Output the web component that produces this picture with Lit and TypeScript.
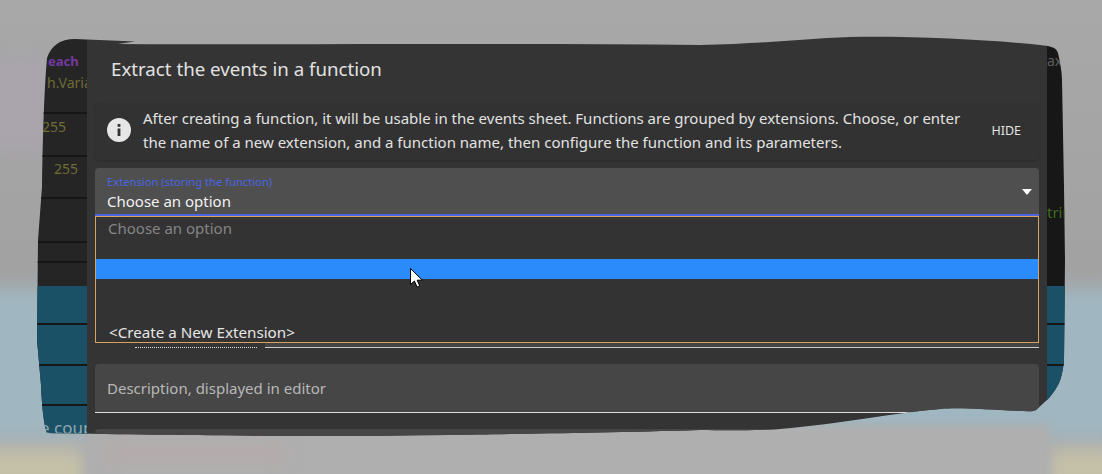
import { LitElement, html, css } from "lit";
import { customElement } from "lit/decorators.js";

@customElement("app-root")
export class AppRoot extends LitElement {
  static styles = css`
    :host { display: block; width: 1102px; height: 474px; font-family: "Noto Sans", sans-serif; }
    .stage { position: relative; width: 1102px; height: 474px; overflow: hidden; background: linear-gradient(#a8a8a8, #a2a2a2 55%, #aeaeae); }
    .blur { position: absolute; filter: blur(9px); }
    .blue { left: -20px; right: -20px; top: 288px; height: 152px; background: #a0b6c0; }
    .sand { left: -20px; width: 105px; top: 450px; height: 40px; background: #c5c1a8; }
    .sand2 { right: -20px; width: 75px; top: 450px; height: 40px; background: #c5c1a8; }
    .mid { left: 85px; right: 52px; top: 425px; height: 70px; background: #afafaf; filter: blur(4px); }
    .pink { left: 105px; width: 180px; top: 447px; height: 14px; background: #b8aaaa; }
    .tint { left: -10px; width: 60px; top: 60px; height: 90px; background: #aaa4ad; }
    .window {
      position: absolute; inset: 0; display: flex;
      clip-path: path("M47 58 C51 46 60 39 75 39 L135 41.5 L118 44 C300 45 500 43 700 45 C760 44 800 39 850 37 C920 36 990 40 1040 45 C1050 46 1056 47 1058 53 C1060 62 1062 72 1062 80 L1064 187 L1065 260 L1064 360 C1063 372 1060 382 1058 385 C1054 392 1050 397 1047 400 L1036 410 C1032 412 1028 411 1024 411 C990 410 960 407 940 409 C900 412 840 424 780 429 C740 431 720 430 700 430 C600 433 500 434 450 435 C300 437 150 435 47 433 C44 425 42 410 41 385 L37 340 L38 240 L42 187 C43 120 45 80 47 58 Z");
    }
    .strip { display: flex; flex-direction: column; flex: none; height: 474px; background: #252525; }
    .left { width: 87px; }
    .right { width: 55px; background: #171717; }
    .row { flex: none; box-sizing: border-box; border-bottom: 2px solid #161616; font-size: 14px; color: #6f6c35; white-space: nowrap; overflow: hidden; }
    .r1 { height: 114px; display: flex; flex-direction: column; padding: 51px 0 0 47px; }
    .r2 { height: 43px; padding: 3px 0 0 42px; }
    .r3 { height: 42px; padding: 2px 0 0 54px; }
    .r4 { height: 44px; }
    .r5 { height: 20px; }
    .r6 { height: 23px; border-bottom: none; }
    .teal { flex: none; box-sizing: border-box; background: #1a5166; border-bottom: 2px solid #161616; }
    .t1 { height: 39px; }
    .t2 { height: 41px; }
    .t3 { height: 40px; }
    .t4 { height: 68px; border-bottom: none; padding: 10px 0 0 40px; font-size: 17px; color: #8fa6ad; white-space: nowrap; overflow: hidden; }
    .each { font-weight: 700; font-size: 13px; color: #7439a0; line-height: 20px; margin-left: 1px; }
    .varia { line-height: 24px; }
    .rtop { height: 286px; flex: none; box-sizing: border-box; display: flex; flex-direction: column; gap: 133px; padding-top: 52px; font-size: 14px; overflow: hidden; }
    .axi { color: #5d5d5d; line-height: 18px; }
    .trin { color: #3d6b21; line-height: 18px; font-size: 15px; }

    .modal { flex: none; width: 960px; height: 474px; box-sizing: border-box; background: #343434; padding: 0 8px; display: flex; flex-direction: column; position: relative; }
    .title { flex: none; height: 103px; box-sizing: border-box; padding: 56px 0 0 16px; font-size: 18.7px; line-height: 26px; color: #e2e2e2; }
    .info { flex: none; height: 57px; box-sizing: border-box; display: flex; align-items: center; padding: 0 18px 3px 12px; background: #323232; border-radius: 4px; box-shadow: 0 1px 2px #2a2a2a; }
    .icon { flex: none; width: 24px; height: 24px; margin-right: 12px; }
    .msg { flex: 1; font-size: 15px; line-height: 24px; color: #e2e2e2; margin-right: 24px; }
    .hide { flex: none; font-size: 12.5px; color: #e2e2e2; margin-top: 1px; }
    .select { flex: none; margin-top: 8px; height: 48px; box-sizing: border-box; background: #4f4f4f; border-radius: 4px 4px 0 0; border-bottom: 2px solid #4a66e4; padding: 7px 12px 0; position: relative; display: flex; flex-direction: column; }
    .lab { font-size: 11.2px; line-height: 14px; color: #4a66e0; }
    .val { font-size: 15px; line-height: 22px; margin-top: 1px; color: #f2f2f2; }
    .arrow { position: absolute; right: 7px; top: 21px; width: 0; height: 0; border-left: 5px solid transparent; border-right: 5px solid transparent; border-top: 6px solid #fff; }
    .hidden-field { flex: none; height: 132px; box-sizing: border-box; background: #444; border-bottom: 1px solid #ccc; position: relative; }
    .notch { position: absolute; left: 0; bottom: -1px; width: 170px; height: 6px; background: #343434; display: flex; align-items: flex-end; padding-left: 40px; box-sizing: border-box; }
    .dots { width: 122px; border-bottom: 1px dotted #ddd; }
    .field { flex: none; height: 49px; box-sizing: border-box; background: #464646; border-bottom: 1px solid #ddd; border-radius: 4px 4px 0 0; padding: 0 12px; font-size: 15px; line-height: 49px; color: #b8b8b8; }
    .f1 { margin-top: 16px; }
    .f2 { margin-top: 16px; }
    .menu { position: absolute; left: 8px; top: 216px; width: 944px; height: 127px; box-sizing: border-box; background: #333; border: 1px solid #d9a35f; display: flex; flex-direction: column; }
    .ph { flex: none; height: 42px; box-sizing: border-box; padding: 0 0 0 12px; font-size: 15px; line-height: 22px; color: #858585; }
    .opt { flex: none; height: 20px; background: #2b8bfb; }
    .spacer { flex: 1; }
    .create { flex: none; padding: 0 0 0 13px; font-size: 15.2px; line-height: 22px; color: #e6e6e6; margin-bottom: -1px; }
    .cursor { position: absolute; left: 410px; top: 268px; width: 13px; height: 20px; }
  `;

  render() {
    return html`
      <div class="stage">
        <div class="blur blue"></div>
        <div class="blur sand"></div>
        <div class="blur sand2"></div>
        <div class="blur mid"></div>
        <div class="blur pink"></div>
        <div class="blur tint"></div>
        <div class="window">
          <div class="strip left">
            <div class="row r1"><span class="each">each</span><span class="varia">h.Varia</span></div>
            <div class="row r2">255</div>
            <div class="row r3">255</div>
            <div class="row r4"></div>
            <div class="row r5"></div>
            <div class="row r6"></div>
            <div class="teal t1"></div>
            <div class="teal t2"></div>
            <div class="teal t3"></div>
            <div class="teal t4">e coup</div>
          </div>
          <div class="modal">
            <div class="title">Extract the events in a function</div>
            <div class="info">
              <svg class="icon" viewBox="0 0 24 24">
                <circle cx="12" cy="12" r="12" fill="#e6e6e6"></circle>
                <rect x="10.6" y="10.5" width="2.8" height="7.5" fill="#333"></rect>
                <rect x="10.6" y="6" width="2.8" height="2.8" fill="#333"></rect>
              </svg>
              <div class="msg">After creating a function, it will be usable in the events sheet. Functions are grouped by extensions. Choose, or enter the name of a new extension, and a function name, then configure the function and its parameters.</div>
              <div class="hide">HIDE</div>
            </div>
            <div class="select">
              <div class="lab">Extension (storing the function)</div>
              <div class="val">Choose an option</div>
              <div class="arrow"></div>
            </div>
            <div class="hidden-field">
              <div class="notch"><div class="dots"></div></div>
            </div>
            <div class="field f1">Description, displayed in editor</div>
            <div class="field f2"></div>
            <div class="menu">
              <div class="ph">Choose an option</div>
              <div class="opt"></div>
              <div class="spacer"></div>
              <div class="create">&lt;Create a New Extension&gt;</div>
            </div>
          </div>
          <div class="strip right">
            <div class="rtop"><span class="axi">axi</span><span class="trin">trin</span></div>
            <div class="teal t1"></div>
            <div class="teal t2"></div>
            <div class="teal t3"></div>
            <div class="teal t4"></div>
          </div>
        </div>
        <svg class="cursor" viewBox="0 0 13 20">
          <path d="M.5 .5V16.5L4.4 13 7 19 9.7 17.9 7.2 12.2H12.3Z" fill="#fff" stroke="#000" stroke-width="1"></path>
        </svg>
      </div>
    `;
  }
}
